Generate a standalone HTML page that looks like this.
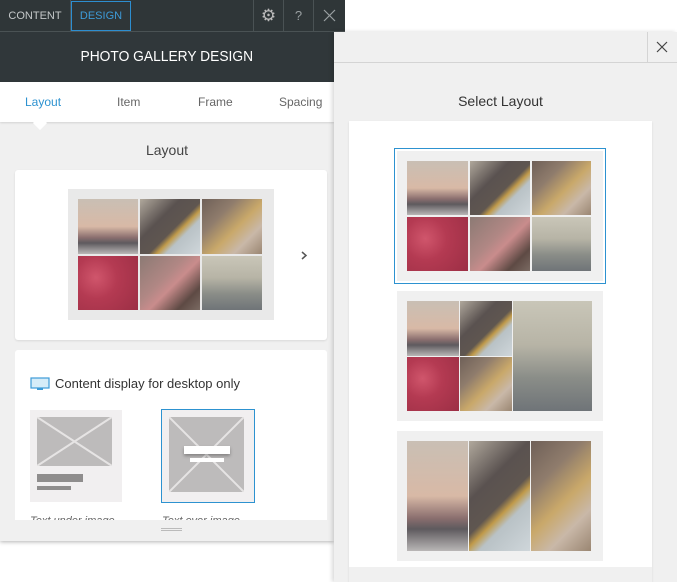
<!DOCTYPE html>
<html><head><meta charset="utf-8"><style>
*{margin:0;padding:0;box-sizing:border-box}
body{width:677px;height:582px;background:#fff;position:relative;overflow:hidden;font-family:"Liberation Sans",sans-serif}
.a{position:absolute}
.br{background:linear-gradient(180deg,#c9bfb4 0%,#d8b9a6 50%,#8b6f6f 70%,#5e5a5e 80%,#b9b6b6 100%)}
.ba{background:linear-gradient(135deg,#b0a89c 0%,#5a5250 35%,#5f5650 55%,#c09a4a 62%,#b9c2c6 70%,#cfd6da 100%)}
.fo{background:linear-gradient(135deg,#6f6058 0%,#8f7c6c 30%,#c9a86a 55%,#c9b8a8 75%,#9a8672 100%)}
.ra{background:radial-gradient(circle at 30% 40%,#d0566c 0,#b43a52 40%,#9c2f45 100%)}
.ha{background:linear-gradient(135deg,#8c7a74 0%,#b08784 40%,#c98c8c 55%,#5e4a44 80%,#7a6a62 100%)}
.ci{background:linear-gradient(180deg,#c9c6b8 0%,#b7b4a6 40%,#8a8d88 70%,#6f7478 100%)}
</style></head><body>
<div class="a" style="left:0;top:0;width:334px;height:541px;background:#f0f0f0;box-shadow:0 1px 4px rgba(0,0,0,.3)"></div>
<div class="a" style="left:0;top:0;width:345px;height:32px;background:#2f3638;border-bottom:1px solid #4a5254"></div>
<div class="a" style="left:0;top:0;width:71px;height:31px;border-right:1px solid #4a5254;color:#c4c8c9;font-size:11px;line-height:32px;text-align:center">CONTENT</div>
<div class="a" style="left:71px;top:1px;width:60px;height:30px;border:1px solid #2d8ed0;color:#3d9bd8;font-size:11px;line-height:28px;text-align:center">DESIGN</div>
<div class="a" style="left:253px;top:0;width:30px;height:31px;border-left:1px solid #4a5254;color:#bbb;font-size:17px;line-height:31px;text-align:center">⚙</div>
<div class="a" style="left:283px;top:0;width:30px;height:31px;border-left:1px solid #4a5254;color:#9aa0a2;font-size:13px;line-height:31px;text-align:center">?</div>
<div class="a" style="left:313px;top:0;width:32px;height:31px;border-left:1px solid #4a5254"><svg width="32" height="31"><path d="M10 10L21 21M21 10L10 21" stroke="#9aa0a2" stroke-width="1.2"/></svg></div>
<div class="a" style="left:0;top:32px;width:334px;height:50px;background:#30373a;color:#fff;font-size:15px;line-height:50px;text-align:center"><span style="display:inline-block;transform:scaleX(.92)">PHOTO GALLERY DESIGN</span></div>
<div class="a" style="left:0;top:82px;width:334px;height:40px;background:#fff;box-shadow:0 1px 2px rgba(0,0,0,.12)"></div>
<div class="a" style="left:35px;top:118px;width:10px;height:10px;background:#fff;transform:rotate(45deg)"></div>
<div class="a" style="left:0;top:82px;width:334px;height:40px;font-size:12px;line-height:40px;color:#666">
<span class="a" style="left:25px;color:#2d92d0">Layout</span><span class="a" style="left:117px">Item</span><span class="a" style="left:198px">Frame</span><span class="a" style="left:279px">Spacing</span></div>
<div class="a" style="left:0;top:142px;width:334px;text-align:center;font-size:14px;color:#444">Layout</div>
<div class="a" style="left:15px;top:170px;width:312px;height:170px;background:#fff;border-radius:3px;box-shadow:0 1px 2px rgba(0,0,0,.1)"></div>
<div class="a" style="left:68px;top:189px;width:206px;height:131px;background:#e9e9e9"></div>
<div class="a br" style="left:78px;top:199px;width:60px;height:55px"></div>
<div class="a ba" style="left:140px;top:199px;width:60px;height:55px"></div>
<div class="a fo" style="left:202px;top:199px;width:60px;height:55px"></div>
<div class="a ra" style="left:78px;top:256px;width:60px;height:54px"></div>
<div class="a ha" style="left:140px;top:256px;width:60px;height:54px"></div>
<div class="a ci" style="left:202px;top:256px;width:60px;height:54px"></div>
<svg class="a" style="left:300px;top:251px" width="8" height="9"><path d="M2 1L6 4.5L2 8" stroke="#555" stroke-width="1.5" fill="none"/></svg>
<div class="a" style="left:15px;top:350px;width:312px;height:175px;background:#fff;border-radius:3px"></div>
<svg class="a" style="left:30px;top:377px" width="20" height="14"><rect x="1" y="1" width="18" height="10" fill="#d6ecf8" stroke="#3d9bd8" stroke-width="1.2"/><rect x="7" y="11" width="6" height="2" fill="#3d9bd8"/></svg>
<div class="a" style="left:55px;top:376px;font-size:13px;color:#333">Content display for desktop only</div>
<div class="a" style="left:30px;top:410px;width:92px;height:92px;background:#f1eff0"></div>
<svg class="a" style="left:37px;top:417px" width="75" height="49"><rect width="75" height="49" fill="#bdbbbb"/><path d="M0 0L75 49M75 0L0 49" stroke="#e6e4e4" stroke-width="2"/></svg>
<div class="a" style="left:37px;top:474px;width:46px;height:8px;background:#8f8d8d"></div>
<div class="a" style="left:37px;top:486px;width:34px;height:4px;background:#8f8d8d"></div>
<div class="a" style="left:161px;top:409px;width:94px;height:94px;border:1px solid #2d92d0;background:#f1eff0"></div>
<svg class="a" style="left:169px;top:417px" width="75" height="75"><rect width="75" height="75" fill="#bdbbbb"/><path d="M0 0L75 75M75 0L0 75" stroke="#e6e4e4" stroke-width="2"/></svg>
<div class="a" style="left:184px;top:446px;width:46px;height:8px;background:#fff;box-shadow:0 2px 3px rgba(0,0,0,.3)"></div>
<div class="a" style="left:190px;top:458px;width:34px;height:4px;background:#fff"></div>
<div class="a" style="left:30px;top:513px;font-size:11px;color:#666;font-style:italic;height:7px;overflow:hidden;line-height:16px">Text under image</div>
<div class="a" style="left:162px;top:513px;font-size:11px;color:#666;font-style:italic;height:7px;overflow:hidden;line-height:16px">Text over image</div>
<div class="a" style="left:0;top:520px;width:334px;height:21px;background:#f0f0f0"></div>
<div class="a" style="left:161px;top:528px;width:21px;height:3px;border-top:1px solid #bbb;border-bottom:1px solid #bbb"></div>
<div class="a" style="left:334px;top:32px;width:343px;height:550px;background:#f0f0f0;box-shadow:-2px 0 4px rgba(0,0,0,.15)"></div>
<div class="a" style="left:334px;top:62px;width:343px;height:1px;background:#d4d4d4"></div>
<div class="a" style="left:647px;top:32px;width:1px;height:30px;background:#d4d4d4"></div>
<svg class="a" style="left:648px;top:32px" width="29" height="30"><path d="M9 10L19 20M19 10L9 20" stroke="#444" stroke-width="1.2"/></svg>
<div class="a" style="left:334px;top:93px;width:333px;text-align:center;font-size:14px;color:#333">Select Layout</div>
<div class="a" style="left:349px;top:121px;width:303px;height:461px;background:#fff;box-shadow:0 1px 2px rgba(0,0,0,.1)"></div>
<div class="a" style="left:394px;top:148px;width:212px;height:136px;border:1px solid #2d92d0"></div>
<div class="a" style="left:397px;top:151px;width:206px;height:130px;background:#f0f0f0"></div>
<div class="a br" style="left:407px;top:161px;width:61px;height:54px"></div>
<div class="a ba" style="left:470px;top:161px;width:60px;height:54px"></div>
<div class="a fo" style="left:532px;top:161px;width:59px;height:54px"></div>
<div class="a ra" style="left:407px;top:217px;width:61px;height:54px"></div>
<div class="a ha" style="left:470px;top:217px;width:60px;height:54px"></div>
<div class="a ci" style="left:532px;top:217px;width:59px;height:54px"></div>
<div class="a" style="left:397px;top:291px;width:206px;height:130px;background:#f0f0f0"></div>
<div class="a br" style="left:407px;top:301px;width:52px;height:55px"></div>
<div class="a ba" style="left:460px;top:301px;width:52px;height:55px"></div>
<div class="a ra" style="left:407px;top:357px;width:52px;height:54px"></div>
<div class="a fo" style="left:460px;top:357px;width:52px;height:54px"></div>
<div class="a ci" style="left:513px;top:301px;width:79px;height:110px"></div>
<div class="a" style="left:397px;top:431px;width:206px;height:130px;background:#f0f0f0"></div>
<div class="a br" style="left:407px;top:441px;width:61px;height:110px"></div>
<div class="a ba" style="left:469px;top:441px;width:61px;height:110px"></div>
<div class="a fo" style="left:531px;top:441px;width:60px;height:110px"></div>
<div class="a" style="left:349px;top:567px;width:303px;height:15px;background:#f0f0f0"></div>
</body></html>
